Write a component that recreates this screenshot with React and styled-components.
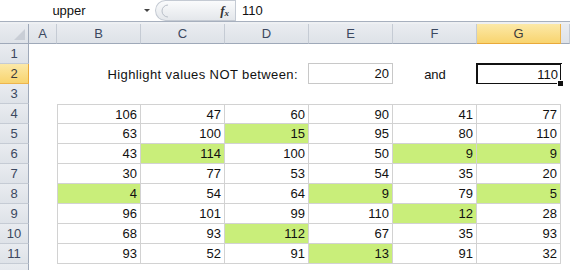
import React from 'react';
import styled, { createGlobalStyle, css } from 'styled-components';

const GlobalStyle = createGlobalStyle`
  html, body { margin: 0; padding: 0; background: #fff; overflow: hidden; }
  body {
    font-family: "Liberation Sans", Arial, sans-serif;
    font-size: 13px;
    color: #111;
  }
`;

const FormulaBar = styled.div`
  display: flex;
  height: 21px;
  border-bottom: 1px solid #A7B0BE;
  background: #fff;
`;

const NameBox = styled.div`
  width: 138px;
  display: flex;
  align-items: center;
  justify-content: center;
`;

const DropArrow = styled.div`
  width: 17px;
  display: flex;
  align-items: center;
  justify-content: center;

  &::before {
    content: '';
    border-left: 3px solid transparent;
    border-right: 3px solid transparent;
    border-top: 3px solid #444;
  }
`;

const FxPill = styled.div`
  width: 80px;
  box-sizing: border-box;
  border: 1px solid #C4CAD3;
  border-right: none;
  border-radius: 11px 0 0 11px;
  background: linear-gradient(#FAFBFC, #E4E7EB);
  display: flex;
  align-items: center;
  justify-content: space-between;
  padding: 0 6px 0 4px;
`;

const Fx = styled.span`
  font-family: "Liberation Serif", serif;
  font-style: italic;
  font-weight: bold;
  font-size: 13px;
  color: #333;

  sub {
    font-size: 9px;
    vertical-align: -1px;
  }
`;

const FormulaInput = styled.div`
  flex: 1;
  border-left: 1px solid #C4CAD3;
  padding-left: 6px;
  display: flex;
  align-items: center;
`;

const Band = styled.div`
  height: 2px;
  background: #EEF0F3;
`;

const Sheet = styled.div`
  display: grid;
  grid-template-columns: 29px 28px repeat(6, 84px) 1fr;
  grid-auto-rows: 20px;
`;

const headerBase = css`
  box-sizing: border-box;
  display: flex;
  align-items: center;
  justify-content: center;
  color: #3B4860;
  background: linear-gradient(#E9ECF0, #DEE2E8);
`;

const selectedHead = css`
  background: linear-gradient(#FCE9A8, #F8D46F);
  color: #3B3B3B;
`;

const ColHead = styled.div`
  ${headerBase}
  border-bottom: 1px solid #9FA9B9;
  border-right: 1px solid #C5CBD4;
  ${(p) => p.$selected && selectedHead}
  ${(p) => p.$selected && css`border-bottom-color: #E9A93A; border-right-color: #EDB54E;`}
`;

const Corner = styled.div`
  ${headerBase}
  border-bottom: 1px solid #9FA9B9;
  border-right: 1px solid #9FA9B9;
  justify-content: flex-end;
  align-items: flex-end;
  padding: 0 3px 3px 0;

  &::after {
    content: '';
    border-left: 11px solid transparent;
    border-bottom: 11px solid #C9CED6;
  }
`;

const RowHead = styled.div`
  ${headerBase}
  border-right: 1px solid #9FA9B9;
  border-bottom: 1px solid #C5CBD4;
  ${(p) => p.$selected && selectedHead}
  ${(p) => p.$selected && css`border-right-color: #E9A93A; border-bottom-color: #EDB54E;`}
`;

const Cell = styled.div`
  box-sizing: border-box;
  display: flex;
  align-items: center;
  justify-content: ${(p) => p.$align || 'flex-end'};
  padding: 0 3px;
  white-space: nowrap;
  position: relative;
  grid-column: ${(p) => p.$span || 'auto'};
  background: ${(p) => (p.$fill ? '#C9EE7A' : '#fff')};

  ${(p) => p.$grid && css`
    border-right: 1px solid #D2D2D2;
    border-bottom: 1px solid #D2D2D2;
  `}
  ${(p) => p.$top && css`border-top: 1px solid #D2D2D2;`}
  ${(p) => p.$left && css`border-left: 1px solid #D2D2D2;`}
  ${(p) => p.$boxed && css`border: 1px solid #C8C8C8; margin: -1px 0 0 -1px;`}
  ${(p) => p.$active && css`
    &::after {
      content: '';
      position: absolute;
      inset: -1px;
      border: 2px solid #111;
    }
    &::before {
      content: '';
      position: absolute;
      right: -3px;
      bottom: -3px;
      width: 5px;
      height: 5px;
      background: #111;
      border: 1px solid #fff;
      z-index: 1;
    }
  `}
`;

const Label = styled(Cell)`
  padding-right: 11px;
  letter-spacing: 0.4px;
`;

const lower = 20;
const upper = 110;

const data = [
  [106, 47, 60, 90, 41, 77],
  [63, 100, 15, 95, 80, 110],
  [43, 114, 100, 50, 9, 9],
  [30, 77, 53, 54, 35, 20],
  [4, 54, 64, 9, 79, 5],
  [96, 101, 99, 110, 12, 28],
  [68, 93, 112, 67, 35, 93],
  [93, 52, 91, 13, 91, 32],
];

const cols = ['A', 'B', 'C', 'D', 'E', 'F', 'G'];

function Grip() {
  return (
    <svg width="10" height="16" viewBox="0 0 10 16">
      <path d="M8 2 A6 6 0 0 0 8 14" fill="none" stroke="#B9BFC8" strokeWidth="1" />
    </svg>
  );
}

export default function App() {
  return (
    <>
      <GlobalStyle />
      <FormulaBar>
        <NameBox>upper</NameBox>
        <DropArrow />
        <FxPill>
          <Grip />
          <Fx>f<sub>x</sub></Fx>
        </FxPill>
        <FormulaInput>{upper}</FormulaInput>
      </FormulaBar>
      <Band />
      <Sheet>
        <Corner />
        {cols.map((c) => (
          <ColHead key={c} $selected={c === 'G'}>{c}</ColHead>
        ))}
        <ColHead />

        <RowHead>1</RowHead>
        <Cell $span="2 / -1" />

        <RowHead $selected>2</RowHead>
        <Label $span="2 / 6">Highlight values NOT between:</Label>
        <Cell $boxed>{lower}</Cell>
        <Cell $align="center">and</Cell>
        <Cell $active>{upper}</Cell>
        <Cell />

        <RowHead>3</RowHead>
        <Cell $span="2 / -1" />

        {data.map((row, r) => (
          <React.Fragment key={r}>
            <RowHead>{r + 4}</RowHead>
            <Cell />
            {row.map((v, c) => (
              <Cell
                key={c}
                $grid
                $top={r === 0}
                $left={c === 0}
                $fill={v < lower || v > upper}
              >
                {v}
              </Cell>
            ))}
            <Cell />
          </React.Fragment>
        ))}

        <RowHead />
        <Cell $span="2 / -1" />
      </Sheet>
    </>
  );
}
